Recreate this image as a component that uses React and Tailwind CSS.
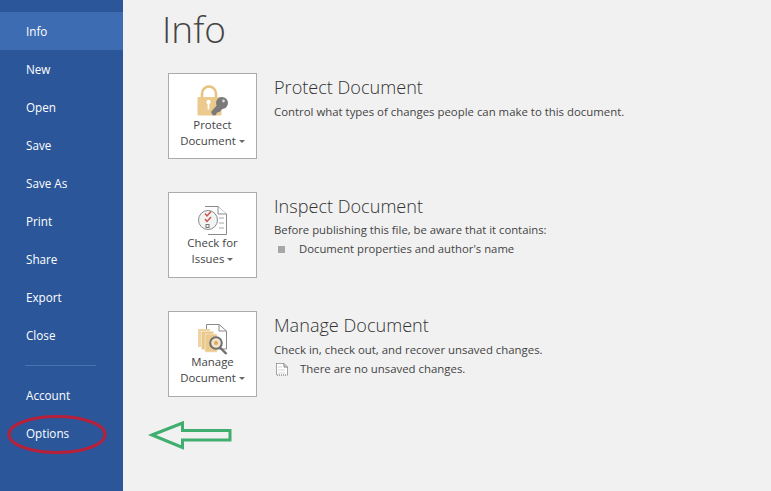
import React from 'react';

const font = { fontFamily: '"Open Sans", "Noto Sans", sans-serif' };

const navTop = ['New', 'Open', 'Save', 'Save As', 'Print', 'Share', 'Export', 'Close'];

function NavItem({ label, active }) {
  return (
    <div className={`h-[38px] flex items-center pt-[2px] pl-[26px] text-[11.7px] text-white ${active ? 'bg-[#3e6cb3]' : ''}`}>
      {label}
    </div>
  );
}

function LockIcon() {
  return (
    <svg width="32" height="31" viewBox="0 0 32 31">
      <path d="M5 13 V8.5 a7 7 0 0 1 14 0 V13" fill="none" stroke="#e6c283" strokeWidth="2.6" />
      <rect x="0.5" y="12" width="24" height="18.5" rx="1" fill="#ecc98c" />
      <circle cx="11.5" cy="17" r="2.2" fill="#fff" />
      <rect x="10.6" y="17" width="1.8" height="7.5" fill="#fff" />
      <g fill="#7a7a7a">
        <circle cx="25" cy="18" r="6" />
        <path d="M21 19 L14 27 L16 30.5 L19 30 L20 27.5 L22.5 27 L27 22 Z" />
      </g>
      <circle cx="26.5" cy="16" r="1.4" fill="#d8d8d8" />
    </svg>
  );
}

function CheckIcon() {
  return (
    <svg width="29" height="29" viewBox="0 0 29 29" className="mt-[2px]">
      <path d="M7 0.5 H20 L28.5 8 V28.5 H10" fill="#fff" stroke="#8a8a8a" />
      <path d="M20 0.5 V8 H28.5" fill="#fff" stroke="#8a8a8a" />
      <path d="M21 12 H26 M21 17 H26 M21 22 H26" stroke="#a8a8a8" />
      <circle cx="10" cy="14" r="9.5" fill="#f4f4f4" stroke="#8a8a8a" />
      <path d="M7 7.5 L9 10 L13 5.5 M7 13 L9 15.5 L13 11" fill="none" stroke="#c9514a" strokeWidth="1.4" />
      <rect x="8" y="18.5" width="3" height="3" fill="none" stroke="#777" />
    </svg>
  );
}

function ManageIcon() {
  return (
    <svg width="30" height="31" viewBox="0 0 30 31" className="mt-[1px]">
      <path d="M8.5 0.5 H21 L28.5 7 V25 H8.5 Z" fill="#fff" stroke="#8a8a8a" />
      <path d="M21 0.5 V7 H28.5" fill="none" stroke="#8a8a8a" />
      <rect x="0" y="5" width="12" height="18" fill="#eed3a3" />
      <rect x="3.5" y="7.5" width="12" height="18" fill="#e9c587" stroke="#f7ecd6" strokeWidth="0.7" />
      <rect x="7" y="10" width="12" height="18" fill="#ecc98c" stroke="#f7ecd6" strokeWidth="0.7" />
      <circle cx="18" cy="19" r="5.8" fill="#f1e2c8" stroke="#6f6f6f" strokeWidth="2" />
      <circle cx="18" cy="19" r="2" fill="#dca760" />
      <path d="M22 23.5 L28.5 30" stroke="#6f6f6f" strokeWidth="2.4" />
    </svg>
  );
}

function Caret() {
  return <span className="inline-block ml-[3px] align-middle border-x-[3px] border-x-transparent border-t-[3px] border-t-[#6a6a6a]" />;
}

function ActionButton({ icon, line1, line2, labelClass }) {
  return (
    <div className="w-[89px] h-[86px] shrink-0 bg-white border border-[#ababab] flex flex-col items-center pt-[11px]">
      <div className="h-[32px] flex items-start justify-center">{icon}</div>
      <div className={`text-[11.4px] leading-[16px] text-[#444] text-center ${labelClass}`}>
        {line1}
        <br />
        {line2}
        <Caret />
      </div>
    </div>
  );
}

function Section({ icon, line1, line2, title, children, className, labelClass }) {
  return (
    <div className={`flex ${className}`}>
      <ActionButton icon={icon} line1={line1} line2={line2} labelClass={labelClass} />
      <div className="ml-[17px] text-[#444]">
        <div className="text-[18.1px] leading-[24px] mt-[2px] font-light text-[#333]">{title}</div>
        {children}
      </div>
    </div>
  );
}

export default function App() {
  return (
    <div className="relative w-[771px] h-[491px] overflow-hidden flex bg-[#f1f1f1]" style={font}>
      {/* Sidebar */}
      <div className="w-[123px] shrink-0 bg-[#2b579a] pt-[12px]">
        <NavItem label="Info" active />
        {navTop.map((item) => (
          <NavItem key={item} label={item} />
        ))}
        <div className="ml-[25px] mr-[27px] mt-[11px] mb-[10px] h-px bg-[#4a72ad]" />
        <NavItem label="Account" />
        <NavItem label="Options" />
      </div>

      {/* Main */}
      <div className="flex-1 pl-[39px]">
        <div className="h-[73px] text-[37px] leading-[58px] font-light text-[#444]">Info</div>
        <div className="pl-[6px]">
          <Section icon={<LockIcon />} line1="Protect" line2="Document" title="Protect Document" className="mb-[33px]">
            <div className="text-[11.4px] leading-[16px] mt-[5px]">Control what types of changes people can make to this document.</div>
          </Section>
          <Section icon={<CheckIcon />} line1="Check for" line2="Issues" title="Inspect Document" className="mb-[33px]" labelClass="-mt-[1px]">
            <div className="text-[11.3px] leading-[16px] mt-[4px]">Before publishing this file, be aware that it contains:</div>
            <div className="flex items-center text-[11.3px] leading-[16px] mt-[3px]">
              <span className="w-[7px] h-[7px] ml-[4px] bg-[#a6a6a6]" />
              <span className="ml-[14px]">Document properties and author's name</span>
            </div>
          </Section>
          <Section icon={<ManageIcon />} line1="Manage" line2="Document" title="Manage Document" labelClass="-mt-[1px]">
            <div className="text-[11.4px] leading-[16px] mt-[5px]">Check in, check out, and recover unsaved changes.</div>
            <div className="flex items-center text-[11.4px] leading-[16px] mt-[3px]">
              <svg width="14" height="14" viewBox="0 0 14 14" className="ml-[1px]">
                <path d="M1.5 1.5 H9 L12.5 5 V13 H1.5 Z" fill="#fff" stroke="#555" strokeDasharray="1 1" />
                <path d="M9 1.5 V5 H12.5" fill="none" stroke="#777" />
                <path d="M3.5 5 H7 M3.5 8 H10 M3.5 11 H10" stroke="#aaa" strokeDasharray="1 1" />
              </svg>
              <span className="ml-[11px]">There are no unsaved changes.</span>
            </div>
          </Section>
        </div>
      </div>

      {/* Annotations drawn over the screenshot */}
      <svg width="771" height="491" viewBox="0 0 771 491" className="absolute inset-0 pointer-events-none">
        <ellipse cx="57" cy="434.5" rx="48" ry="18" fill="none" stroke="#b5203a" strokeWidth="3" />
        <path d="M152 435 L182.5 423 V430.5 H230 V440 H182.5 V447.5 Z" fill="none" stroke="#3fae6e" strokeWidth="3" />
      </svg>
    </div>
  );
}
